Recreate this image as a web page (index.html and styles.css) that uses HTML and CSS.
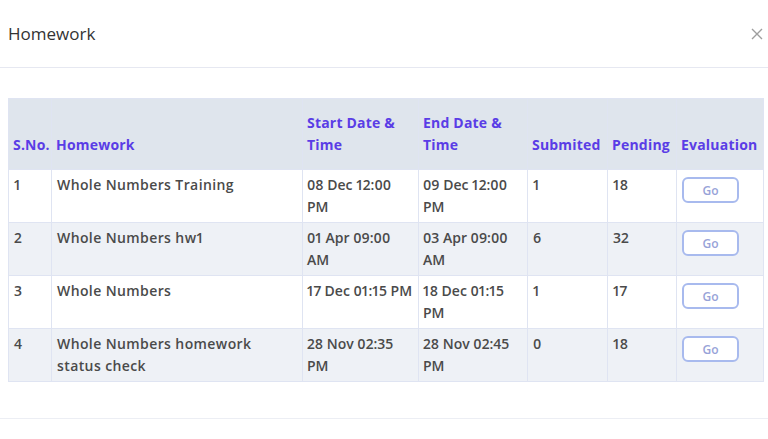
FILE: index.html
```html
<!DOCTYPE html>
<html lang="en">
<head>
    <meta charset="UTF-8">
    <meta name="viewport" content="width=device-width, initial-scale=1.0">
    <title>Homework</title>
    <link rel="stylesheet" href="styles.css">
</head>
<body>

    <div class="modal">
        <div class="modal-header">
            <h2>Homework</h2>
            <button class="close-btn" aria-label="Close">
                <svg width="12" height="12" viewBox="0 0 12 12">
                    <path d="M1 1 L11 11 M11 1 L1 11" stroke="#9e9e9e" stroke-width="1.4" fill="none"/>
                </svg>
            </button>
        </div>

        <div class="modal-body">
            <table class="hw-table">
                <colgroup>
                    <col style="width:43px">
                    <col style="width:251px">
                    <col style="width:116px">
                    <col style="width:109px">
                    <col style="width:80px">
                    <col style="width:69px">
                    <col style="width:87px">
                </colgroup>
                <thead>
                    <tr>
                        <th>S.No.</th>
                        <th>Homework</th>
                        <th>Start Date &amp; Time</th>
                        <th>End Date &amp; Time</th>
                        <th>Submited</th>
                        <th>Pending</th>
                        <th>Evaluation</th>
                    </tr>
                </thead>
                <tbody>
                    <tr>
                        <td>1</td>
                        <td class="name">Whole Numbers Training</td>
                        <td class="date">08 Dec 12:00 PM</td>
                        <td class="date">09 Dec 12:00 PM</td>
                        <td>1</td>
                        <td>18</td>
                        <td><button class="go-btn">Go</button></td>
                    </tr>
                    <tr>
                        <td>2</td>
                        <td class="name">Whole Numbers hw1</td>
                        <td class="date">01 Apr 09:00 AM</td>
                        <td class="date">03 Apr 09:00 AM</td>
                        <td>6</td>
                        <td>32</td>
                        <td><button class="go-btn">Go</button></td>
                    </tr>
                    <tr>
                        <td>3</td>
                        <td class="name">Whole Numbers</td>
                        <td class="date">17 Dec 01:15 PM</td>
                        <td class="date">18 Dec 01:15 PM</td>
                        <td>1</td>
                        <td>17</td>
                        <td><button class="go-btn">Go</button></td>
                    </tr>
                    <tr>
                        <td>4</td>
                        <td class="name">Whole Numbers homework status check</td>
                        <td class="date">28 Nov 02:35 PM</td>
                        <td class="date">28 Nov 02:45 PM</td>
                        <td>0</td>
                        <td>18</td>
                        <td><button class="go-btn">Go</button></td>
                    </tr>
                </tbody>
            </table>
        </div>

        <div class="modal-footer"></div>
    </div>

</body>
</html>
```

FILE: styles.css
```css
/* Global Styles */
body {
    font-family: "Open Sans", "Liberation Sans", sans-serif;
    background-color: #fff;
    margin: 0;
    padding: 0;
    color: #4a4a4a;
}

.modal {
    width: 768px;
    background-color: #fff;
}

.modal-header {
    height: 67px;
    display: flex;
    justify-content: space-between;
    align-items: center;
    padding: 0 4px 0 8px;
    border-bottom: 1.5px solid #e6e8f1;
}

.modal-header h2 {
    margin: 0;
    font-size: 17px;
    font-weight: 500;
    color: #333;
}

.close-btn {
    background: none;
    border: none;
    padding: 0;
    width: 14px;
    height: 14px;
    display: flex;
    align-items: center;
    justify-content: center;
}

.modal-body {
    padding: 30px 5px 36px 8px;
}

.hw-table {
    width: 755px;
    table-layout: fixed;
    border-collapse: collapse;
    font-size: 14px;
    font-weight: 600;
    line-height: 22px;
    font-variant-numeric: proportional-nums;
}

.hw-table th,
.hw-table td {
    border: 1px solid #dfe4f2;
    padding: 4px 5px;
    text-align: left;
    vertical-align: top;
}

.hw-table th {
    background-color: #dfe5ed;
    color: #5a3de6;
    font-weight: 700;
    vertical-align: bottom;
    padding: 13px 3px 13px 4px;
    letter-spacing: 0.2px;
}

.hw-table td.name {
    letter-spacing: 0.4px;
}

.hw-table td.date {
    padding-right: 2px;
    padding-left: 4px;
}

.hw-table tbody tr:nth-child(even) td {
    background-color: #eef1f6;
}

.go-btn {
    display: block;
    width: 57px;
    height: 26px;
    margin-top: 3px;
    background-color: #fff;
    border: 2px solid #a8baee;
    border-radius: 6px;
    color: #97a3d8;
    font-family: inherit;
    font-size: 12px;
    font-weight: 600;
    cursor: pointer;
}

.modal-footer {
    border-top: 1.5px solid #eceef4;
    height: 20px;
}
```
